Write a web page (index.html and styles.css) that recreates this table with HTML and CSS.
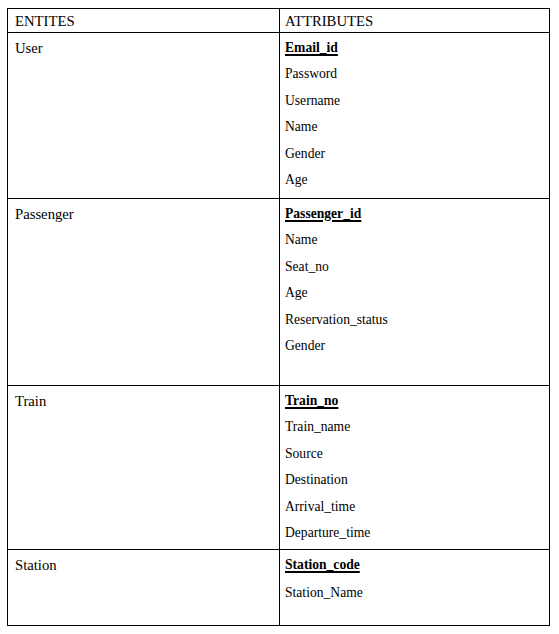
FILE: index.html
```html
<!DOCTYPE html>
<html lang="en">
<head>
<meta charset="utf-8">
<title>Entities and Attributes</title>
<link rel="stylesheet" href="styles.css">
</head>
<body>
<div class="table">
  <div class="cell head">ENTITES</div>
  <div class="cell head">ATTRIBUTES</div>

  <div class="cell entity row-user">User</div>
  <div class="cell attrs row-user">
    <div class="attr key">Email_id</div>
    <div class="attr">Password</div>
    <div class="attr">Username</div>
    <div class="attr">Name</div>
    <div class="attr">Gender</div>
    <div class="attr">Age</div>
  </div>

  <div class="cell entity row-passenger">Passenger</div>
  <div class="cell attrs row-passenger">
    <div class="attr key">Passenger_id</div>
    <div class="attr">Name</div>
    <div class="attr">Seat_no</div>
    <div class="attr">Age</div>
    <div class="attr">Reservation_status</div>
    <div class="attr">Gender</div>
  </div>

  <div class="cell entity row-train">Train</div>
  <div class="cell attrs row-train">
    <div class="attr key">Train_no</div>
    <div class="attr">Train_name</div>
    <div class="attr">Source</div>
    <div class="attr">Destination</div>
    <div class="attr">Arrival_time</div>
    <div class="attr">Departure_time</div>
  </div>

  <div class="cell entity row-station">Station</div>
  <div class="cell attrs row-station">
    <div class="attr key">Station_code</div>
    <div class="attr spaced">Station_Name</div>
  </div>
</div>
</body>
</html>
```
FILE: styles.css
```css
html, body {
  margin: 0;
  padding: 0;
  background: #fff;
}

body {
  font-family: "Liberation Serif", "Times New Roman", serif;
  color: #000;
}

.table {
  display: grid;
  grid-template-columns: 272px 270px;
  grid-template-rows: 24px 166px 187px 164px 76px;
  width: 542px;
  margin: 8px 0 0 7px;
  border-top: 1px solid #000;
  border-left: 1px solid #000;
}

.cell {
  box-sizing: border-box;
  border-right: 1px solid #000;
  border-bottom: 1px solid #000;
  padding: 2px 0 0 7px;
  font-size: 14.7px;
  line-height: 26.4px;
}

.cell:nth-child(even) {
  padding-left: 5px;
}

.head {
  line-height: 24px;
  padding-top: 0;
}

.attr {
  font-size: 13.6px;
  line-height: 26.4px;
}

.key {
  font-weight: bold;
  text-decoration: underline;
  text-decoration-thickness: 2px;
  text-underline-offset: 2px;
}

.spaced {
  margin-top: 1.6px;
}
```
